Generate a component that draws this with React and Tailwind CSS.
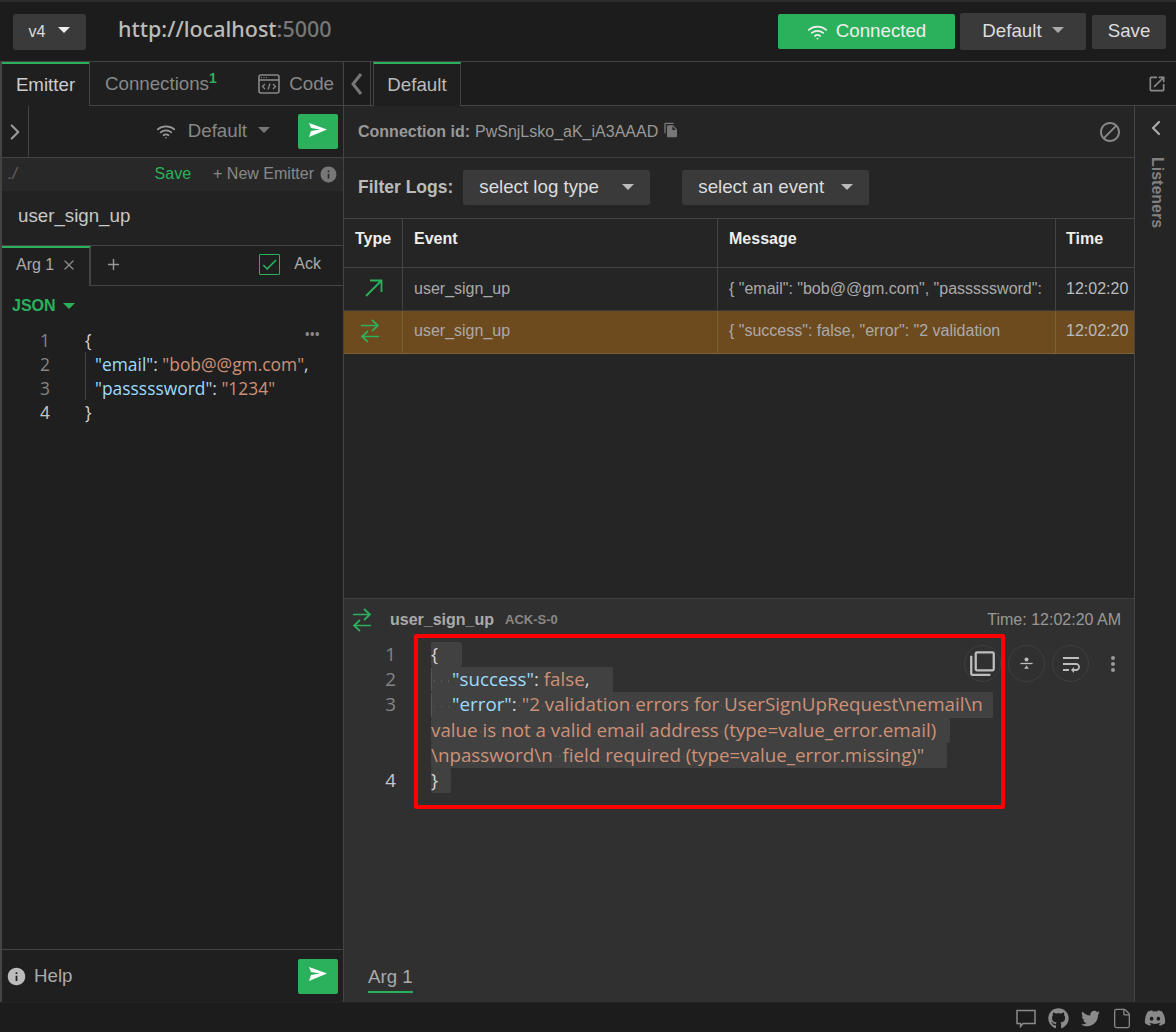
import { ChevronLeft, ChevronRight, File, Plus, X } from "lucide-react";
import { MdBlock, MdCheck, MdFileCopy, MdFilterNone, MdInfo, MdOpenInNew, MdWrapText } from "react-icons/md";
import { FaGithub, FaTwitter, FaDiscord } from "react-icons/fa";

const Caret = ({ className = "" }) => (
  <span className={`inline-block w-0 h-0 border-x-[6px] border-x-transparent border-t-[6px] ${className}`} />
);

function Wifi({ className = "" }) {
  return (
    <svg viewBox="0 0 24 18" fill="none" stroke="currentColor" strokeWidth="2" strokeLinecap="round" className={className}>
      <path d="M2 6.5c5.8-5 14.2-5 20 0" />
      <path d="M5.5 10c3.800-3.200 9.200-3.200 13 0" />
      <path d="M9 13.500c1.800-1.400 4.200-1.400 6 0" />
      <circle cx="12" cy="16.500" r="1" fill="currentColor" stroke="none" />
    </svg>
  );
}

function SendButton() {
  return (
    <button className="w-10 h-[35px] rounded-[2px] bg-[#2bb15b] flex items-center justify-center">
      <svg viewBox="0 0 20 16" className="w-5 h-4 -mt-[4px]" fill="#fff">
        <path d="M1 1 L19 7.500 L1 15 L3 9 L12 7.500 L3 6 Z" />
      </svg>
    </button>
  );
}

function SwapIcon({ className = "" }) {
  return (
    <svg viewBox="0 0 20 24" fill="none" stroke="#2bb15b" strokeWidth="1.700" className={className}>
      <path d="M1 6.500H18M12 1L18 6.500L12 12" />
      <path d="M19 17.500H2M8 12L2 17.500L8 23" />
    </svg>
  );
}

const Str = ({ children }) => <span className="text-[#ce9178]">{children}</span>;
const Key = ({ children }) => <span className="text-[#9cdcfe]">{children}</span>;

// selected text in the response editor shows its whitespace as faint dots
function Dotted({ text }) {
  return text.split(/( )/).map((part, i) =>
    part === " " ? (
      <span key={i} className="bg-[radial-gradient(circle_at_50%_56%,#626262_0.7px,transparent_1px)]"> </span>
    ) : (
      part
    )
  );
}

const Indent = () => (
  <span className="inline-block align-top w-[21px] h-[25.2px] bg-[radial-gradient(circle_at_50%_56%,#5c5c5c_0.7px,transparent_1px)] bg-[length:7px_100%]" />
);

const LOGS = [
  { icon: "out", msg: '{ "email": "bob@@gm.com", "passsssword":', time: "12:02:20" },
  { icon: "ack", msg: '{ "success": false, "error": "2 validation', time: "12:02:20", active: true },
];

function LogRow({ log }) {
  const line = log.active ? "border-[#7d6038]" : "border-[#444]";
  return (
    <div className={`flex h-[43px] items-center text-[16px] text-[#aaa] border-b ${log.active ? "bg-[#6e4b1f] border-[#7d6038]" : "border-[#3a3a3a]"}`}>
      <div className={`w-[59px] h-full flex items-center justify-center border-r ${line}`}>
        {log.icon === "out" ? (
          <svg viewBox="0 0 18 18" className="w-[18px] h-[18px] ml-[1px] -mt-[3px]" fill="none" stroke="#2bb15b" strokeWidth="1.800">
            <path d="M1 17L16.500 1.500M5 1.500H16.500V13" />
          </svg>
        ) : (
          <SwapIcon className="w-[20px] h-[24px] mr-[6px] -mt-[2px]" />
        )}
      </div>
      <div className={`w-[315px] h-full flex items-center pl-[11px] border-r ${line} ${log.active ? "pb-[2px]" : ""}`}>user_sign_up</div>
      <div className={`w-[338px] h-full flex items-center pl-[11px] whitespace-nowrap overflow-hidden border-r ${line} ${log.active ? "pb-[2px]" : ""}`}>{log.msg}</div>
      <div className={`flex-1 pl-[10px] text-[#bbb] ${log.active ? "pb-[2px]" : ""}`}>{log.time}</div>
    </div>
  );
}

const RESPONSE = [
  { num: "1", w: "w-[31px]", code: <>{"{"}</> },
  { num: "2", w: "w-[182px]", guide: true, code: <><Indent /><Key>"success"</Key>: <Str><Dotted text="false" /></Str>,</> },
  { num: "3", w: "w-[562px]", guide: true, code: <><Indent /><Key>"error"</Key>:<Dotted text=" " /><Str><Dotted text={'"2 validation errors for UserSignUpRequest\\nemail\\n'} /></Str></> },
  { w: "w-[519px]", code: <Str><Dotted text="value is not a valid email address (type=value_error.email)" /></Str> },
  { w: "w-[516px]", code: <Str><Dotted text={'\\npassword\\n  field required (type=value_error.missing)"'} /></Str> },
  { num: "4", w: "w-[20px]", code: <>{"}"}</> },
];

function RoundBtn({ children }) {
  return (
    <div className="w-[37px] h-[37px] rounded-full border border-[#3f3f3f] flex items-center justify-center text-[#bdbdbd]">
      {children}
    </div>
  );
}

export default function App() {
  return (
    <div className="w-[1176px] h-[1032px] overflow-hidden flex flex-col bg-[#1c1c1c] text-[#ccc] font-['Liberation_Sans',Arial,sans-serif]">
      {/* Header */}
      <header className="h-[62px] shrink-0 flex items-center border-t-2 border-b border-[#2b2b2b] border-b-[#444] pl-[13px] pr-[10px]">
        <button className="w-[73px] h-9 rounded-[3px] bg-[#3a3a3a] flex items-center justify-center gap-[13px] text-[16px] text-[#ddd]">
          v4 <Caret className="border-t-[#eee] -mt-[3px]" />
        </button>
        <div className="ml-[32px] text-[21.5px] font-['Noto_Sans',sans-serif] font-medium text-[#bbb] -mt-[5px]">
          http://localhost<span className="text-[#777]">:5000</span>
        </div>
        <div className="ml-auto flex items-center">
          <div className="w-[177px] h-[35px] rounded-[2px] bg-[#2bb15b] flex items-center justify-center gap-[8px] text-[18.72px] text-[#eee]">
            <Wifi className="w-[21px] h-[16px]" /> Connected
          </div>
          <div className="ml-[5px] w-[126px] h-[37px] rounded-[2px] bg-[#3a3a3a] flex items-center justify-center gap-[10px] text-[18.72px] text-[#ddd]">
            Default <Caret className="border-t-[#aaa] -mt-[3px]" />
          </div>
          <div className="ml-[6px] w-[74px] h-[34px] rounded-[2px] bg-[#3a3a3a] flex items-center justify-center text-[18.72px] text-[#ddd]">Save</div>
        </div>
      </header>

      <div className="flex-1 min-h-0 flex">
        {/* Emitter panel */}
        <aside className="w-[344px] shrink-0 flex flex-col border-l-2 border-r border-[#444] bg-[#1f1f1f]">
          <div className="h-[44px] shrink-0 flex text-[18.72px]">
            <div className="w-[87px] border-t-2 border-[#2bb15b] flex items-center justify-center text-[#ccc]">Emitter</div>
            <div className="flex-1 flex items-center border-l border-b border-[#444] text-[#888] pl-[15px] pt-px">
              <span>Connections</span>
              <span className="text-[#2bb15b] text-[14px] font-bold self-start mt-[5px]">1</span>
              <span className="ml-auto flex items-center gap-[9px] pr-[9px]">
                <svg viewBox="0 0 22 20" className="w-[22px] h-[20px]" fill="none" stroke="#888" strokeWidth="1.600">
                  <rect x="1" y="1" width="20" height="18" rx="2" />
                  <path d="M1 6h20" />
                  <path d="M3 3.500h1M5.500 3.500h1M8 3.500h1" strokeWidth="1.200" />
                  <path d="M7 10l-2.500 2.500L7 15M15 10l2.500 2.500L15 15M12 9.500l-2 6" strokeWidth="1.300" />
                </svg>
                Code
              </span>
            </div>
          </div>
          <div className="h-[52px] shrink-0 flex items-center border-b border-[#444] pr-[5px]">
            <div className="w-[27px] h-full border-r border-[#444] flex items-center justify-center">
              <ChevronRight className="w-[28px] h-[28px] text-[#999]" strokeWidth={2} />
            </div>
            <div className="ml-auto flex items-center text-[18.72px] text-[#888]">
              <Wifi className="w-[20px] h-[15px] text-[#999]" />
              <span className="ml-[12px]">Default</span>
              <Caret className="ml-[11px] border-t-[#777] -mt-[2px]" />
            </div>
            <div className="ml-[28px]"><SendButton /></div>
          </div>
          <div className="h-[33px] shrink-0 flex items-center bg-[#282828] pl-[6px] pr-[5px] pb-px text-[16px]">
            <span className="text-[#666] italic">./</span>
            <span className="ml-auto text-[#2bb15b]">Save</span>
            <span className="ml-[22px] text-[#888]">+ New Emitter</span>
            <MdInfo className="ml-[5px] w-[19px] h-[19px] text-[#777]" />
          </div>
          <div className="h-[54px] shrink-0 flex items-center pl-[16px] pb-[3px] bg-[#222] text-[18.72px] text-[#c8c8c8]">user_sign_up</div>
          <div className="h-[41px] shrink-0 flex items-center border-t border-[#444]">
            <div className="w-[89px] h-full flex items-center pl-[14px] pb-[3px] gap-[7px] text-[16px] text-[#aaa] border-r-2 border-b-0 border-[#444] border-t-2 border-t-[#2bb15b] -mt-px">
              Arg 1 <X className="w-[16px] h-[16px] text-[#888]" />
            </div>
            <div className="flex-1 h-full flex items-center pb-[3px] border-b border-[#444]">
              <Plus className="ml-[14px] w-[17px] h-[17px] text-[#999]" />
              <div className="ml-auto w-[21px] h-[21px] border border-[#2bb15b] rounded-[1px] flex items-center justify-center">
                <MdCheck className="w-[19px] h-[19px] text-[#2bb15b]" />
              </div>
              <span className="ml-[14px] mr-[22px] text-[16px] text-[#aaa]">Ack</span>
            </div>
          </div>
          <div className="flex items-center gap-[7px] pl-[10px] mt-[8px] text-[16px] font-bold text-[#2bb15b]">
            JSON <Caret className="border-x-[5px] border-t-[5px] border-t-[#2bb15b]" />
          </div>
          <div className="relative mt-[10px] text-[17.4px] leading-[24px] font-['Open_Sans',sans-serif] text-[#d4d4d4]">
            <span className="absolute right-[23px] top-0 text-[#888] text-[12px] leading-[14px] font-bold tracking-[0.5px]">•••</span>
            {[
              ["1", <>{"{"}</>],
              ["2", <>{"  "}<Key>"email"</Key>: <Str>"bob@@gm.com"</Str>,</>],
              ["3", <>{"  "}<Key>"passsssword"</Key>: <Str>"1234"</Str></>],
              ["4", <>{"}"}</>],
            ].map(([n, code]) => (
              <div key={n} className="flex h-[24px]">
                <div className={`w-[49px] pr-[1px] text-right ${n === "4" ? "text-[#c6c6c6]" : "text-[#858585]"}`}>{n}</div>
                <div className={`ml-[34px] whitespace-pre ${n === "2" || n === "3" ? "border-l border-[#444]" : ""}`}>{code}</div>
              </div>
            ))}
          </div>
          <div className="mt-auto h-[53px] shrink-0 flex items-center border-t border-[#444] pl-[4px] pr-[5px]">
            <MdInfo className="w-[21px] h-[21px] text-[#bbb]" />
            <span className="ml-[7px] text-[18.72px] text-[#aaa]">Help</span>
            <div className="ml-auto"><SendButton /></div>
          </div>
        </aside>

        {/* Logs */}
        <main className="flex-1 min-w-0 flex flex-col">
          <div className="h-[44px] shrink-0 flex border-b border-[#444]">
            <div className="w-[27px] flex items-center justify-center border-r border-[#444]">
              <svg viewBox="0 0 14 24" className="w-[14px] h-[24px]" fill="none" stroke="#777" strokeWidth="3"><path d="M11 2 L3 12 L11 22" /></svg>
            </div>
            <div className="ml-[2px] w-[88px] border-t-2 border-x border-[#444] border-t-[#2bb15b] flex items-center justify-center text-[18.72px] text-[#bbb] -mb-px bg-[#1f1f1f]">Default</div>
            <div className="ml-auto flex items-center pr-[9px]">
              <MdOpenInNew className="w-[20px] h-[20px] text-[#888]" />
            </div>
          </div>
          <div className="flex-1 min-h-0 flex">
            <div className="w-[790px] shrink-0 flex flex-col bg-[#252525]">
              <div className="h-[52px] shrink-0 flex items-center border-b border-[#3f3f3f] pl-[14px] pr-[12px] text-[16px]">
                <span className="font-bold text-[#999]">Connection id:</span>
                <span className="ml-[5px] text-[#999]">PwSnjLsko_aK_iA3AAAD</span>
                <MdFileCopy className="ml-[5px] w-[16px] h-[16px] text-[#777] -mt-[3px]" />
                <MdBlock className="ml-auto w-[24px] h-[24px] text-[#888]" />
              </div>
              <div className="h-[60px] shrink-0 flex items-center pl-[14px] pb-[2px]">
                <span className="text-[17.5px] font-bold text-[#bbb]">Filter Logs:</span>
                <div className="ml-[10px] w-[187px] h-[35px] rounded-[2px] bg-[#3a3a3a] flex items-center pl-[16px] text-[18.72px] text-[#ddd]">
                  select log type <Caret className="ml-auto mr-[16px] border-t-[#bbb]" />
                </div>
                <div className="ml-[32px] w-[187px] h-[35px] rounded-[2px] bg-[#3a3a3a] flex items-center pl-[16px] text-[18.72px] text-[#ddd]">
                  select an event <Caret className="ml-auto mr-[16px] border-t-[#bbb]" />
                </div>
              </div>
              <div className="h-[50px] shrink-0 flex text-[16px] font-bold text-[#eee] border-y border-[#444]">
                <div className="w-[59px] border-r border-[#444] flex items-center pl-[11px] pb-[9px]">Type</div>
                <div className="w-[315px] border-r border-[#444] flex items-center pl-[11px] pb-[9px]">Event</div>
                <div className="w-[338px] border-r border-[#444] flex items-center pl-[11px] pb-[9px]">Message</div>
                <div className="flex-1 flex items-center pl-[10px] pb-[9px]">Time</div>
              </div>
              {LOGS.map((log, i) => <LogRow key={i} log={log} />)}

              {/* Response detail */}
              <section className="mt-auto h-[404px] shrink-0 flex flex-col bg-[#303030] border-t border-[#3f3f3f] relative">
                <div className="h-[35px] shrink-0 flex items-center pl-[8px] pr-[13px] mt-[3px]">
                  <SwapIcon className="w-[20px] h-[24px]" />
                  <span className="ml-[18px] text-[16px] font-bold text-[#aaa]">user_sign_up</span>
                  <span className="ml-[11px] text-[13px] font-bold text-[#888]">ACK-S-0</span>
                  <span className="ml-auto text-[16px] text-[#999]">Time: 12:02:20 AM</span>
                </div>
                <div className="mt-[5px] text-[18.8px] leading-[25.2px] font-['Open_Sans',sans-serif] text-[#d4d4d4]">
                  {RESPONSE.map((line, i) => (
                    <div key={i} className="flex h-[25.2px]">
                      <div className={`w-[52px] shrink-0 text-right ${line.num === "4" ? "text-[#c6c6c6]" : "text-[#858585]"}`}>{line.num}</div>
                      <div className={`ml-[35px] h-full rounded-[2px] whitespace-pre bg-[#414141] ${line.w} ${line.guide ? "bg-[linear-gradient(#555,#555)] bg-[length:1px_100%] bg-no-repeat" : ""}`}>{line.code}</div>
                    </div>
                  ))}
                </div>
                {/* red annotation over the editor */}
                <div className="absolute left-[70px] top-[35px] w-[591px] h-[175px] border-4 border-[#ff0000] rounded-[2px]" />
                <div className="absolute right-[19px] top-[46px] flex items-center gap-[7px]">
                  <RoundBtn><MdFilterNone className="w-[27px] h-[27px]" /></RoundBtn>
                  <RoundBtn>
                    <svg viewBox="0 0 16 16" className="w-[15px] h-[15px]" fill="currentColor">
                      <path d="M1.500 7.300h13v1.400h-13z" />
                      <circle cx="8" cy="3.700" r="2.100" />
                      <path d="M8 10.200l2.500 3.300h-5z" />
                    </svg>
                  </RoundBtn>
                  <RoundBtn><MdWrapText className="w-[24px] h-[24px]" /></RoundBtn>
                  <span className="ml-[15px] flex flex-col gap-[2px]">
                    <i className="w-[4px] h-[4px] rounded-full bg-[#999]" />
                    <i className="w-[4px] h-[4px] rounded-full bg-[#999]" />
                    <i className="w-[4px] h-[4px] rounded-full bg-[#999]" />
                  </span>
                </div>
                <div className="mt-auto mb-[9px] ml-[24px] w-fit text-[18.72px] text-[#aaa] border-b-2 border-[#2bb15b]">Arg 1</div>
              </section>
            </div>
            <div className="flex-1 bg-[#252525] border-l border-[#444] flex flex-col items-center">
              <ChevronLeft className="mt-[10px] ml-[1px] w-[24px] h-[24px] text-[#aaa]" strokeWidth={2.200} />
              <span className="mt-[17px] ml-[2px] text-[16px] font-bold text-[#808080] [writing-mode:vertical-rl]">Listeners</span>
            </div>
          </div>
        </main>
      </div>

      {/* Footer */}
      <footer className="h-[30px] shrink-0 flex items-center justify-end gap-[12px] pr-[10px] pt-[1px] text-[#8a8a8a] border-t border-[#222]">
        <svg viewBox="0 0 20 19" className="w-[20px] h-[19px]" fill="none" stroke="currentColor" strokeWidth="1.500"><path d="M1 1.500h18v13H7l-2.500 3v-3H1z" /></svg>
        <FaGithub className="w-[21px] h-[21px]" />
        <FaTwitter className="w-[19px] h-[19px]" />
        <File className="w-[22px] h-[23px] mx-[-1px]" strokeWidth={1.400} />
        <FaDiscord className="w-[22px] h-[22px]" />
      </footer>
    </div>
  );
}
